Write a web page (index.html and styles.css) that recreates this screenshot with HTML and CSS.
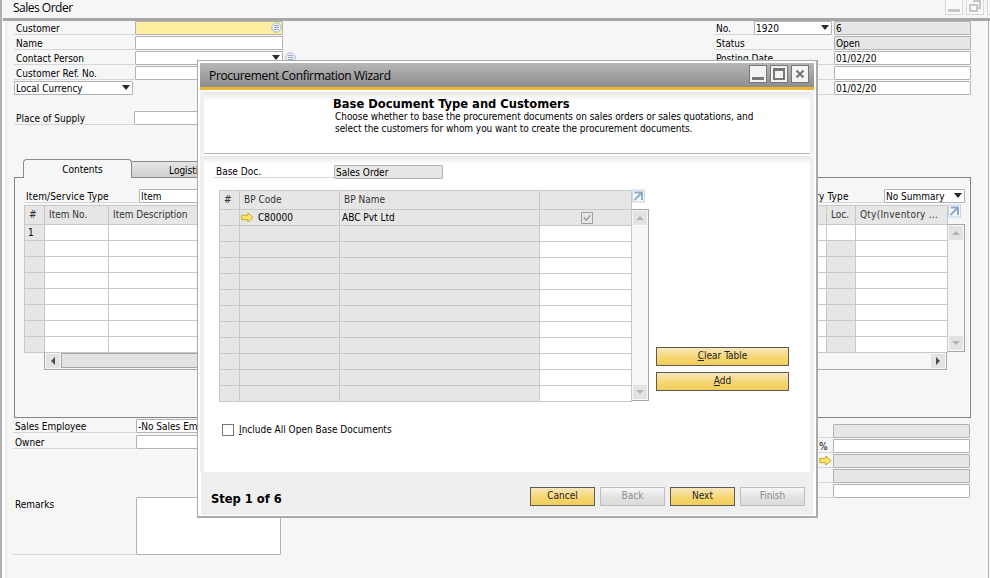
FILE: index.html
```
<!DOCTYPE html>
<html lang="en">
<head>
    <meta charset="UTF-8">
    <title>Sales Order</title>
    <link rel="stylesheet" href="styles.css">
</head>
<body>
    <svg width="0" height="0" class="defs">
        <symbol id="arrow" viewBox="0 0 13 11">
            <path d="M.7 3.3h6.2V.9l5.2 4.6-5.2 4.6V7.7H.7z" fill="#fbe66b" stroke="#c9a62c"/>
        </symbol>
        <symbol id="expand" viewBox="0 0 13 13">
            <rect x=".5" y=".5" width="12" height="12" fill="#f4f8fb" stroke="#c3d6e4"/>
            <path d="M2.500 3h8.500M10 2v8.500M10 3l-7.500 7.500" fill="none" stroke="#8eabc9" stroke-width="2"/>
        </symbol>
        <symbol id="list" viewBox="0 0 11 11">
            <circle cx="5.5" cy="5.5" r="4.7" fill="#eef3f6" stroke="#a9b5c4"/>
            <path d="M3 3.5h5M3 5.5h5M3 7.5h5" stroke="#93a6c0"/>
        </symbol>
    </svg>

    <div class="window">
        <div class="titlebar">
            <span>Sales Order</span>
            <div class="win-btns">
                <i><svg width="16" height="16"><path d="M2 12.500h12" stroke="#c6c6c6" stroke-width="3"/></svg></i>
                <i><svg width="16" height="16"><path d="M3 7h7v6H3zM7 4.500V3h6v7h-2" fill="none" stroke="#c6c6c6" stroke-width="2"/></svg></i>
                <i></i>
            </div>
        </div>

        <div class="form">
            <div class="header">
                <div class="header-left">
                    <div class="row"><label>Customer</label><div class="field active"><svg class="list-icon"><use href="#list"/></svg></div></div>
                    <div class="row"><label>Name</label><div class="field"></div></div>
                    <div class="row"><label>Contact Person</label><div class="field select"></div><svg class="list-icon outside"><use href="#list"/></svg></div>
                    <div class="row"><label>Customer Ref. No.</label><div class="field"></div></div>
                    <div class="row"><div class="field select currency">Local Currency</div></div>
                    <div class="row supply"><label>Place of Supply</label><div class="field"></div></div>
                </div>
                <div class="header-right">
                    <div class="row"><label class="short">No.</label><div class="field select series">1920</div><div class="field ro">6</div></div>
                    <div class="row"><label>Status</label><div class="field ro">Open</div></div>
                    <div class="row"><label>Posting Date</label><div class="field">01/02/20</div></div>
                    <div class="row"><label></label><div class="field"></div></div>
                    <div class="row"><label></label><div class="field">01/02/20</div></div>
                </div>
            </div>

            <div class="tabs">
                <div class="tab current">Contents</div>
                <div class="tab">Logistics</div>
            </div>
            <div class="panel">
                <div class="type-row">
                    <label>Item/Service Type</label>
                    <div class="field">Item</div>
                    <label class="summary">Summary Type</label>
                    <div class="field select">No Summary</div>
                </div>
                <div class="grid-wrap">
                    <table class="items">
                        <colgroup><col class="c-num"><col class="c-no"><col><col class="c-loc"><col class="c-qty"></colgroup>
                        <tr><th>#</th><th>Item No.</th><th>Item Description</th><th>Loc.</th><th>Qty(Inventory ...</th></tr>
                        <tr class="first"><td>1</td><td></td><td></td><td></td><td></td></tr>
                        <tr><td></td><td></td><td></td><td></td><td></td></tr>
                        <tr><td></td><td></td><td></td><td></td><td></td></tr>
                        <tr><td></td><td></td><td></td><td></td><td></td></tr>
                        <tr><td></td><td></td><td></td><td></td><td></td></tr>
                        <tr><td></td><td></td><td></td><td></td><td></td></tr>
                        <tr><td></td><td></td><td></td><td></td><td></td></tr>
                        <tr><td></td><td></td><td></td><td></td><td></td></tr>
                    </table>
                    <div class="side">
                        <svg class="expand"><use href="#expand"/></svg>
                        <div class="vscroll"><b class="up"></b><b class="down"></b></div>
                    </div>
                </div>
                <div class="hscroll"><b class="left"></b><div class="thumb"></div><b class="right"></b></div>
            </div>

            <div class="footer">
                <div class="footer-left">
                    <div class="row"><label>Sales Employee</label><div class="field">-No Sales Employee-</div></div>
                    <div class="row owner"><label>Owner</label><div class="field"></div></div>
                    <div class="row remarks"><label>Remarks</label><div class="field"></div></div>
                </div>
                <div class="footer-right">
                    <div class="row"><label></label><div class="field ro"></div></div>
                    <div class="row"><label>%</label><div class="field"></div></div>
                    <div class="row"><label><svg class="arrow"><use href="#arrow"/></svg></label><div class="field ro"></div></div>
                    <div class="row"><label></label><div class="field ro"></div></div>
                    <div class="row"><label></label><div class="field"></div></div>
                </div>
            </div>
        </div>
    </div>

    <div class="dialog">
        <div class="dialog-title">
            <span>Procurement Confirmation Wizard</span>
            <div class="win-btns">
                <i><svg width="16" height="16"><path d="M2 12.500h12" stroke="#777" stroke-width="3"/></svg></i>
                <i><svg width="16" height="16"><path d="M3 4h10v9H3z" fill="none" stroke="#777" stroke-width="2"/><path d="M2 3.500h12" stroke="#777" stroke-width="3"/></svg></i>
                <i><svg width="16" height="16"><path d="M4.500 4.500l7 7M11.500 4.500l-7 7" stroke="#777" stroke-width="2.200"/></svg></i>
            </div>
        </div>
        <div class="intro">
            <h1>Base Document Type and Customers</h1>
            <p>Choose whether to base the procurement documents on sales orders or sales quotations, and<br>select the customers for whom you want to create the procurement documents.</p>
        </div>
        <div class="content">
            <div class="row base-doc"><label>Base Doc.</label><div class="field ro">Sales Order</div></div>
            <div class="grid-wrap">
                <table class="partners">
                    <colgroup><col class="c-num"><col class="c-code"><col class="c-name"><col></colgroup>
                    <tr><th>#</th><th>BP Code</th><th>BP Name</th><th></th></tr>
                    <tr class="first"><td></td><td><svg class="arrow"><use href="#arrow"/></svg>C80000</td><td>ABC Pvt Ltd</td><td><svg class="check" width="12" height="12"><path d="M.5.5h11v11H.5z" fill="none" stroke="#a0a0a0"/><path d="M3 5.500l2.200 2.700L9.300 3.500" fill="none" stroke="#999" stroke-width="1.500"/></svg></td></tr>
                    <tr><td></td><td></td><td></td><td></td></tr>
                    <tr><td></td><td></td><td></td><td></td></tr>
                    <tr><td></td><td></td><td></td><td></td></tr>
                    <tr><td></td><td></td><td></td><td></td></tr>
                    <tr><td></td><td></td><td></td><td></td></tr>
                    <tr><td></td><td></td><td></td><td></td></tr>
                    <tr><td></td><td></td><td></td><td></td></tr>
                    <tr><td></td><td></td><td></td><td></td></tr>
                    <tr><td></td><td></td><td></td><td></td></tr>
                    <tr><td></td><td></td><td></td><td></td></tr>
                    <tr><td></td><td></td><td></td><td></td></tr>
                </table>
                <div class="side">
                    <svg class="expand"><use href="#expand"/></svg>
                    <div class="vscroll"><b class="up"></b><b class="down"></b></div>
                </div>
                <div class="actions">
                    <button><span><u>C</u>lear Table</span></button>
                    <button><span><u>A</u>dd</span></button>
                </div>
            </div>
            <div class="include"><div class="box"></div><span><u>I</u>nclude All Open Base Documents</span></div>
        </div>
        <div class="steps">
            <h2>Step 1 of 6</h2>
            <button>Cancel</button>
            <button disabled>Back</button>
            <button>Next</button>
            <button disabled>Finish</button>
        </div>
    </div>
</body>
</html>
```
FILE: styles.css
```
* {
    margin: 0;
    padding: 0;
    box-sizing: border-box;
}

body {
    position: relative;
    width: 990px;
    height: 578px;
    overflow: hidden;
    background: #f6f6f6;
    color: #000;
    font-family: "DejaVu Sans Condensed", "DejaVu Sans", sans-serif;
    font-stretch: condensed;
    font-size: 10px;
    line-height: 13px;
    white-space: nowrap;
}

svg {
    display: block;
    flex: none;
}

.defs {
    position: absolute;
}

/* main window */
.window {
    height: 578px;
    border-left: 2px solid #b0b0b0;
}

.titlebar {
    display: flex;
    justify-content: space-between;
    height: 21px;
    margin-left: 1px;
    border-bottom: 3px solid #a6a6a6;
    padding-left: 10px;
    font-family: "Open Sans", sans-serif;
    font-stretch: normal;
    font-size: 12px;
    line-height: 16px;
    letter-spacing: -0.5px;
}

.win-btns {
    display: flex;
    gap: 3px;
}

.win-btns i {
    width: 18px;
    height: 18px;
    border: 1px solid #787878;
    background: #f3f3f3;
}

.titlebar .win-btns {
    width: 45px;
    height: 15px;
    overflow: hidden;
}

.titlebar .win-btns i {
    flex: none;
    height: 18px;
    margin-top: -3px;
    border-color: #d8d8d8;
    background: #f9f9f9;
}

.form {
    height: 557px;
    width: 987px;
    border-left: 3px solid #fff;
    border-right: 1px solid #b4b4b4;
    padding-left: 9px;
    box-shadow: inset 3px 0 #f1f1f1;
}

.row {
    display: flex;
    height: 14px;
    margin-bottom: 1px;
}

label {
    flex: none;
    height: 14px;
    border-bottom: 1px solid #d3d6da;
    padding: 1px 0 0 2px;
}

.field {
    position: relative;
    height: 14px;
    border: 1px solid #b2b2b2;
    border-radius: 1px;
    padding-left: 1px;
    background: #fff;
    overflow: hidden;
}

.field.ro {
    background: #e6e6e6;
}

.field.active {
    background: #feee9f;
}

.select::after {
    content: "";
    position: absolute;
    right: 2px;
    top: 3px;
    border: 4px solid transparent;
    border-top: 5px solid #2a2a2a;
    border-bottom: 0;
}

.list-icon {
    width: 11px;
    height: 11px;
    margin-left: auto;
}

.list-icon.outside {
    margin: 1px 0 0 2px;
}

.header {
    display: flex;
    justify-content: space-between;
    height: 138px;
}

.header-left label {
    width: 121px;
}

.header-left .field {
    width: 148px;
}

.header-left .currency {
    width: 119px;
}

.supply {
    margin-top: 16px;
}

.header-left .supply label {
    width: 120px;
}

.header-right {
    width: 257px;
    margin-right: 17px;
}

.header-right label {
    width: 120px;
}

.header-right .field {
    width: 137px;
}

.header-right .short {
    width: 40px;
}

.header-right .series {
    width: 78px;
    margin-right: 2px;
}

/* tabs */
.tabs {
    position: relative;
    display: flex;
    align-items: flex-end;
    height: 19px;
    padding-left: 9px;
    margin-bottom: -1px;
}

.tab {
    width: 109px;
    height: 17px;
    border: 1px solid #8a8a8a;
    border-left: 0;
    background: linear-gradient(#e6e6e6, #cfcfcf);
    padding-left: 5px;
    text-align: center;
    line-height: 17px;
}

.tab.current {
    height: 19px;
    border-left: 1px solid #8a8a8a;
    border-bottom: 0;
    border-radius: 4px 4px 0 0;
    background: #f6f6f6;
    padding-left: 10px;
    line-height: 20px;
}

.panel {
    width: 957px;
    height: 241px;
    border: 1px solid #848484;
    padding: 11px 0 0 9px;
}

.type-row {
    display: flex;
    height: 14px;
}

.type-row label {
    width: 115px;
    letter-spacing: 0.15px;
}

.type-row .field {
    width: 81px;
}

.type-row .summary {
    width: 104px;
    margin-left: 560px;
    padding: 1px 37px 0 0;
    text-align: right;
}

.grid-wrap {
    display: flex;
    margin-top: 2px;
}

table {
    border-collapse: collapse;
    table-layout: fixed;
}

th,
td {
    height: 16px;
    border: 1px solid #c8c8c8;
    background: #fff;
    line-height: 13px;
    text-align: left;
}

th {
    height: 19px;
    background: #e6e6e6;
    color: #333;
    font-weight: normal;
    padding: 0 0 2px 4px;
}

td:first-child {
    background: #e6e6e6;
    padding-left: 3px;
}

.items {
    width: 924px;
}

.c-num {
    width: 20px;
}

.c-no {
    width: 64px;
}

.c-loc {
    width: 29px;
}

.c-qty {
    width: 92px;
}

.items tr:not(.first) td:nth-child(4) {
    background: #e6e6e6;
}

.items th:last-child {
    letter-spacing: 0.25px;
}

.side {
    flex: none;
    margin-top: -1px;
}

.expand {
    width: 13px;
    height: 14px;
    margin-bottom: 6px;
}

.vscroll,
.hscroll {
    display: flex;
    justify-content: space-between;
    border: 1px solid #a6a6a6;
    background: #f6f6f6;
    padding: 1px;
}

.vscroll {
    flex-direction: column;
    width: 17px;
    height: 128px;
    border-left: 0;
}

.hscroll {
    width: 903px;
    height: 17px;
    margin-left: 20px;
    border-top: 0;
}

.vscroll b,
.hscroll b {
    display: flex;
    align-items: center;
    justify-content: center;
    width: 14px;
    height: 14px;
    background: #e3e3e3;
}

.vscroll b::after,
.hscroll b::after {
    content: "";
    border: 4px solid transparent;
}

.vscroll .up::after {
    border-top: 0;
    border-bottom-color: #b4b4b4;
}

.vscroll .down::after {
    border-bottom: 0;
    border-top-color: #b4b4b4;
}

.hscroll .left::after {
    border-left: 0;
    border-right-color: #4d4d4d;
}

.hscroll .right::after {
    border-right: 0;
    border-left-color: #4d4d4d;
}

.thumb {
    width: 500px;
    height: 15px;
    margin: -1px auto 0 1px;
    border: 1px solid #a6a6a6;
    background: #e3e3e3;
}

/* totals and remarks */
.footer {
    display: flex;
    justify-content: space-between;
    padding: 1px 18px 0 0;
    margin-left: -1px;
}

.footer-left label {
    width: 123px;
}

.footer-left .field {
    width: 145px;
}

.owner {
    margin-top: 2px;
}

.remarks {
    height: 58px;
    margin-top: 48px;
}

.remarks label,
.remarks .field {
    height: 58px;
}

.footer-right {
    padding-top: 5px;
}

.footer-right label {
    width: 16px;
}

.footer-right .field {
    width: 137px;
}

.arrow {
    width: 13px;
    height: 11px;
}

/* wizard dialog */
.dialog {
    position: absolute;
    left: 197px;
    top: 60px;
    width: 621px;
    height: 458px;
    border: 1px solid #ababab;
    border-right-width: 2px;
    border-bottom-width: 2px;
    padding: 2px;
    background: #fff;
}

.dialog-title {
    display: flex;
    justify-content: space-between;
    height: 27px;
    border-bottom: 3px solid #f0b530;
    background: linear-gradient(#b7b7b7, #8d8d8d);
    padding: 2px 5px 0 9px;
    font-family: "Open Sans", sans-serif;
    font-stretch: normal;
    font-size: 12px;
    line-height: 21px;
    letter-spacing: -0.34px;
}

.intro,
.content {
    border: solid #f0f0f0;
    border-width: 0 4px;
}

.intro {
    height: 64px;
    border-top: 2px solid #fff;
    background: linear-gradient(#e6e6e6, #fff 9px);
    box-shadow: inset 0 -1px #b9b9b9;
    padding: 4px 0 0 129px;
}

h1,
h2 {
    font-family: "DejaVu Sans", sans-serif;
    font-stretch: condensed;
    font-size: 12.8px;
    line-height: 15px;
}

.intro p {
    padding-left: 2px;
    line-height: 12px;
    letter-spacing: -0.055px;
}

.content {
    height: 318px;
    border-top: 2px solid #fff;
    background: linear-gradient(#e6e6e6, #fff 8px);
    padding: 9px 0 0 10px;
}

.base-doc label {
    width: 120px;
    height: 13px;
    padding-top: 0;
}

.base-doc .field {
    width: 109px;
}

.content .grid-wrap {
    margin: 11px 0 0 5px;
}

.partners {
    width: 413px;
}

.c-code {
    width: 100px;
}

.c-name {
    width: 200px;
}

.partners td:nth-child(-n+3),
.partners .first td {
    background: #e6e6e6;
    padding-left: 2px;
}

.partners .arrow {
    float: left;
    margin: 1px 4px 0 -1px;
}

.check {
    margin: 0 auto;
}

.content .vscroll {
    height: 192px;
}

.actions {
    margin: 157px 0 0 7px;
}

button {
    display: block;
    width: 65px;
    height: 19px;
    border: 1px solid #5e5b50;
    background: linear-gradient(#f7e7bd, #f5d56d 60%, #f1cd5c);
    color: #222;
    font: inherit;
    line-height: 15px;
    padding-bottom: 2px;
}

.actions button {
    width: 133px;
    margin-bottom: 6px;
}

button:disabled {
    border-color: #bdbdbd;
    background: linear-gradient(#f8f8f8, #e0e0e0 60%, #dcdcdc);
    color: #8d8d8d;
}

.include {
    display: flex;
    align-items: center;
    gap: 5px;
    margin: 21px 0 0 8px;
}

.box {
    width: 12px;
    height: 12px;
    border: 1px solid #777;
    background: #fff;
}

.steps {
    display: flex;
    align-items: center;
    gap: 5px;
    height: 43px;
    margin: 0 1px;
    background: #efefef;
    padding: 5px 8px 0 10px;
}

.steps h2 {
    margin: 5px auto 0 0;
}
```
